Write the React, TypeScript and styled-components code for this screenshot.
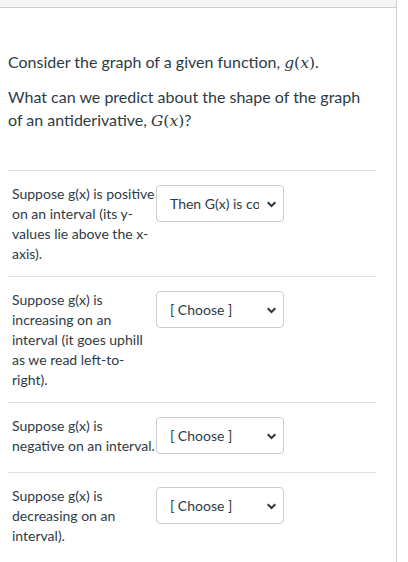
import styled, { createGlobalStyle } from "styled-components";

const Global = createGlobalStyle`
    html, body{
        margin: 0;
        padding: 0;
        background: #fff;
    }
    body{
        font-family: Lato, "Noto Sans", sans-serif;
        color: #2d3b45;
    }
`

const rows = [
    { text: "Suppose g(x) is positive on an interval (its y-values lie above the x-axis).", value: "Then G(x) is concave up" },
    { text: "Suppose g(x) is increasing on an interval (it goes uphill as we read left-to-right).", value: "[ Choose ]" },
    { text: "Suppose g(x) is negative on an interval.", value: "[ Choose ]" },
    { text: "Suppose g(x) is decreasing on an interval).", value: "[ Choose ]" },
]

function Chevron() {
    return (
        <svg width="11" height="10" viewBox="0 0 11 10">
            <path d="M1.7 3.2 L5.5 7 L9.3 3.2" fill="none" stroke="#2d3b45" strokeWidth="2.1" />
        </svg>
    )
}

export default function App() {
    return (
        <>
            <Global />
            <Page>
                <TopBar />
                <Content>
                    <Question>
                        <p>Consider the graph of a given function, <M>g</M><Paren>(</Paren><M>x</M><Paren>)</Paren>.</p>
                        <p>What can we predict about the shape of the graph of an antiderivative, <M>G</M><Paren>(</Paren><M>x</M><Paren>)</Paren>?</p>
                    </Question>
                    <Matches>
                        {rows.map(row => {
                            return (
                                <Row key={row.text}>
                                    <Prompt>{row.text}</Prompt>
                                    <Select>
                                        <span>{row.value}</span>
                                        <Chevron />
                                    </Select>
                                </Row>
                            )
                        })}
                    </Matches>
                </Content>
            </Page>
        </>
    )
}

const Page = styled.div`
    width: 397px;
    height: 562px;
    border-right: 1px solid #c7cdd1;
    box-sizing: border-box;
    overflow: hidden;
`
const TopBar = styled.div`
    height: 7px;
    background: #f5f5f5;
    border-bottom: 1px solid #c7cdd1;
`
const Content = styled.div`
    padding: 0 20px 0 8px;
`
const Question = styled.div`
    padding-top: 42px;
    padding-bottom: 37px;
    font-size: 16px;
    line-height: 23px;
    & > p{
        margin: 0 0 10px;
    }
    & > p:last-child{
        margin-bottom: 0;
    }
`
const M = styled.i`
    font-family: "DejaVu Serif", "Liberation Serif", serif;
    font-size: 15.5px;
`
const Paren = styled.span`
    font-family: "DejaVu Serif", "Liberation Serif", serif;
    font-size: 15.5px;
`
const Matches = styled.div`
    border-top: 1px solid #e0e0e0;
`
const Row = styled.div`
    display: flex;
    align-items: flex-start;
    padding: 13px 0 12px 4px;
    border-bottom: 1px solid #e0e0e0;
    &:last-child{
        border-bottom: none;
    }
`
const Prompt = styled.div`
    width: 144px;
    font-size: 14px;
    line-height: 20px;
`
const Select = styled.div`
    margin: 1px 0 6px;
    width: 128px;
    height: 37px;
    box-sizing: border-box;
    border: 1px solid #c7cdd1;
    border-radius: 4px;
    background: #fff;
    display: flex;
    align-items: center;
    justify-content: space-between;
    padding: 0 6px 0 13px;
    font-size: 14px;
    & > span{
        width: 89px;
        white-space: nowrap;
        overflow: hidden;
    }
`
